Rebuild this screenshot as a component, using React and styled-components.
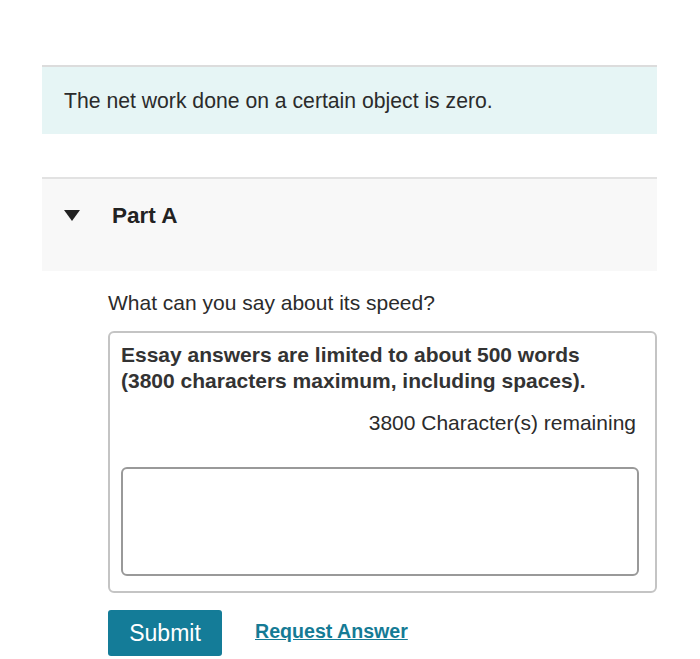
import React from 'react';
import styled, { createGlobalStyle } from 'styled-components';

const GlobalStyle = createGlobalStyle`
  body {
    margin: 0;
    background: #ffffff;
    font-family: "Liberation Sans", Arial, sans-serif;
    color: #2b2b2b;
  }
`;

export default function App() {
  return (
    <>
      <GlobalStyle />
      <Page>
        <Intro>The net work done on a certain object is zero.</Intro>
        <PartHeader>
          <Caret viewBox="0 0 16 12" aria-hidden="true">
            <path d="M0 0 H16 L8 11 Z" fill="#222" />
          </Caret>
          <PartTitle>Part A</PartTitle>
        </PartHeader>
        <PartBody>
          <Question>What can you say about its speed?</Question>
          <EssayBox>
            <Limit>
              Essay answers are limited to about 500 words
              <br />
              (3800 characters maximum, including spaces).
            </Limit>
            <Remaining>3800 Character(s) remaining</Remaining>
            <Answer />
          </EssayBox>
          <Actions>
            <SubmitButton>Submit</SubmitButton>
            <RequestLink href="#">Request Answer</RequestLink>
          </Actions>
        </PartBody>
      </Page>
    </>
  );
}

const Page = styled.div`
  width: 615px;
  margin-left: 42px;
  padding-top: 65px;
`;

const Intro = styled.div`
  background: #e6f5f5;
  border-top: 2px solid #dcdcdc;
  height: 67px;
  padding-left: 22px;
  display: flex;
  align-items: center;
  font-size: 21.2px;
  color: #2b2b2b;
`;

const PartHeader = styled.div`
  margin-top: 43px;
  background: #f8f8f8;
  border-top: 2px solid #e2e2e2;
  height: 94px;
  display: flex;
  align-items: center;
  padding-left: 22px;
  box-sizing: border-box;
  padding-bottom: 18px;
`;

const Caret = styled.svg`
  width: 16px;
  height: 12px;
  margin-right: 32px;
`;

const PartTitle = styled.h3`
  margin: 0;
  font-size: 22.5px;
  font-weight: bold;
  color: #222;
`;

const PartBody = styled.div`
  padding-left: 66px;
`;

const Question = styled.p`
  margin: 20px 0 16px;
  font-size: 21px;
  color: #2b2b2b;
`;

const EssayBox = styled.div`
  border: 2px solid #c4c4c4;
  border-radius: 6px;
  padding: 9px 16px 15px 11px;
`;

const Limit = styled.div`
  font-size: 21px;
  font-weight: bold;
  line-height: 26px;
  color: #333;
`;

const Remaining = styled.div`
  margin-top: 17px;
  padding-right: 3px;
  text-align: right;
  font-size: 21px;
  color: #2b2b2b;
`;

const Answer = styled.textarea`
  display: block;
  width: 100%;
  box-sizing: border-box;
  height: 109px;
  margin-top: 32px;
  border: 2px solid #999;
  border-radius: 6px;
  resize: none;
  font-family: inherit;
  font-size: 18px;
`;

const Actions = styled.div`
  display: flex;
  align-items: center;
  gap: 33px;
  margin-top: 17px;
`;

const SubmitButton = styled.button`
  width: 114px;
  height: 46px;
  background: #147c98;
  color: #ffffff;
  border: none;
  border-radius: 3px;
  font-family: "Liberation Sans", Arial, sans-serif;
  font-size: 23px;
  cursor: pointer;
`;

const RequestLink = styled.a`
  color: #157b95;
  font-weight: bold;
  font-size: 19.6px;
  text-decoration: underline;
  margin-bottom: 4px;
`;
